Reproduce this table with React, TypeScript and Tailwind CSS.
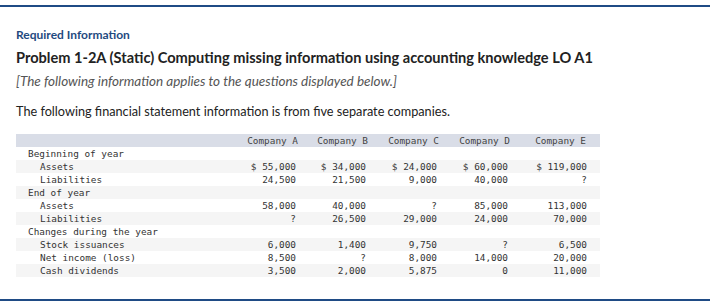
const companies = ["Company A", "Company B", "Company C", "Company D", "Company E"];

type Row = { label: string; indent?: boolean; values?: string[] };

const rows: Row[] = [
  { label: "Beginning of year" },
  { label: "Assets", indent: true, values: ["$ 55,000", "$ 34,000", "$ 24,000", "$ 60,000", "$ 119,000"] },
  { label: "Liabilities", indent: true, values: ["24,500", "21,500", "9,000", "40,000", "?"] },
  { label: "End of year" },
  { label: "Assets", indent: true, values: ["58,000", "40,000", "?", "85,000", "113,000"] },
  { label: "Liabilities", indent: true, values: ["?", "26,500", "29,000", "24,000", "70,000"] },
  { label: "Changes during the year" },
  { label: "Stock issuances", indent: true, values: ["6,000", "1,400", "9,750", "?", "6,500"] },
  { label: "Net income (loss)", indent: true, values: ["8,500", "?", "8,000", "14,000", "20,000"] },
  { label: "Cash dividends", indent: true, values: ["3,500", "2,000", "5,875", "0", "11,000"] },
];

// grid: label | A | B | C | D | E | filler
const cols = "grid grid-cols-[226px_58px_70px_71px_71px_79px_9px]";

export default function App() {
  return (
    <div className="w-[710px] h-[301px] bg-white overflow-hidden font-['Lato','Liberation_Sans',sans-serif]">
      <div className="mt-[5px] h-[2px] bg-[#1f4b85]" />

      <div className="pl-4 pt-[20px]">
        <p className="text-[12px] leading-[16px] font-bold text-[#1f4a80]">Required Information</p>
        <h1 className="mt-[5px] text-[14.6px] leading-[20px] font-bold text-[#222]">
          Problem 1-2A (Static) Computing missing information using accounting knowledge LO A1
        </h1>
        <p className="mt-[4px] text-[13.5px] leading-[18px] italic text-[#555]">
          [The following information applies to the questions displayed below.]
        </p>
        <p className="mt-[12px] text-[12.7px] leading-[18px] text-[#222]">
          The following financial statement information is from five separate companies.
        </p>

        <div className="mt-[14px] w-[584px] font-['DejaVu_Sans_Mono','Liberation_Mono',monospace] text-[9.4px] leading-[13px] text-[#333]">
          <div className={`${cols} h-[13px] bg-[#d9dde7] text-[#444]`}>
            <div />
            {companies.map((c, i) => (
              <div key={c} className={`text-right ${i === 4 ? "pr-[5px]" : "pr-[2px]"}`}>
                {c}
              </div>
            ))}
            <div />
          </div>
          {rows.map((r, idx) => (
            <div key={idx} className={`${cols} h-[13px] ${idx % 2 === 1 ? "bg-[#f5f5f5]" : "bg-white"}`}>
              <div className={r.indent ? "pl-[24px]" : "pl-[12px]"}>{r.label}</div>
              {(r.values ?? ["", "", "", "", ""]).map((v, i) => (
                <div key={i} className="text-right pr-[4px] whitespace-pre">
                  {v}
                </div>
              ))}
              <div />
            </div>
          ))}
        </div>
      </div>

      <div className="mt-[22px] h-[2px] bg-[#1f4b85]" />
    </div>
  );
}
